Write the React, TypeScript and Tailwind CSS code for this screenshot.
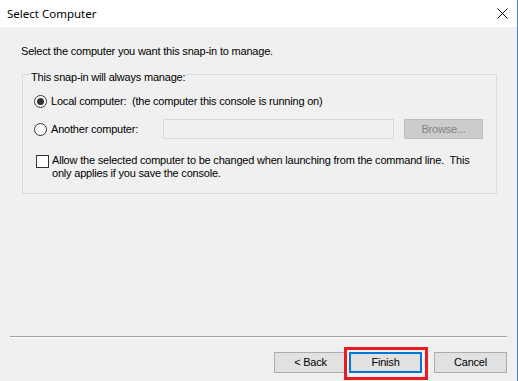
export default function App() {
  const ui = { fontFamily: '"Liberation Sans", Arial, sans-serif' };

  return (
    <div
      className="w-[518px] h-[381px] flex flex-col bg-[#f0f0f0] border-r border-[#3c7fd2] text-[11px] leading-[13px] tracking-[-0.2px] text-black overflow-hidden"
      style={ui}
    >
      {/* title bar */}
      <div className="h-[27px] shrink-0 flex items-center justify-between bg-white pl-[7px] pr-[9px]">
        <span
          className="text-[11.5px] tracking-normal text-black"
          style={{ fontFamily: '"Noto Sans", "Open Sans", sans-serif' }}
        >
          Select Computer
        </span>
        <svg width="11" height="11" viewBox="0 0 11 11" className="block">
          <path d="M0.5 0.5 L10.5 10.5 M10.5 0.5 L0.5 10.5" stroke="#000" strokeWidth="1" />
        </svg>
      </div>

      <div className="ml-[21px] mt-[18px]">Select the computer you want this snap-in to manage.</div>

      {/* group box */}
      <div className="relative ml-[22px] mt-[16px] w-[475px] h-[120px] border border-[#dcdcdc] pl-[11px]">
        <span className="absolute -top-[4px] left-[7px] px-[1px] bg-[#f0f0f0]">
          This snap-in will always manage:
        </span>

        <div className="mt-[20px] flex items-center h-[13px]">
          <span className="w-[13px] h-[13px] rounded-full border border-[#333] bg-white flex items-center justify-center">
            <span className="w-[7px] h-[7px] rounded-full bg-[#333]" />
          </span>
          <span className="ml-[4px] whitespace-pre">Local computer:  (the computer this console is running on)</span>
        </div>

        <div className="mt-[11px] flex items-center h-[20px]">
          <span className="w-[13px] h-[13px] rounded-full border border-[#333] bg-white" />
          <span className="ml-[4px] w-[112px]">Another computer:</span>
          <div className="w-[231px] h-[20px] border border-[#d9d9d9] bg-[#f0f0f0]" />
          <div className="ml-[10px] w-[79px] h-[20px] border border-[#bfbfbf] bg-[#cccccc] text-[#838383] flex items-center justify-center">
            Browse...
          </div>
        </div>

        <div className="mt-[15px] flex items-start ml-[2px]">
          <span className="mt-[1px] w-[13px] h-[13px] shrink-0 border border-[#333] bg-white" />
          <span className="ml-[3px] whitespace-pre">
            Allow the selected computer to be changed when launching from the command line.  This
            <br />
            only applies if you save the console.
          </span>
        </div>
      </div>

      {/* separator */}
      <div className="ml-[10px] mt-[142px] w-[497px] border-t border-[#a0a0a0] border-b border-b-white" />

      {/* buttons */}
      <div className="mt-[14px] flex justify-end pr-[10px]">
        <div className="w-[73px] h-[21px] border border-[#adadad] bg-[#e1e1e1] flex items-center justify-center">
          &lt; Back
        </div>
        <div className="relative ml-[2px]">
          <div className="w-[73px] h-[21px] border-2 border-[#0078d7] bg-[#e1e1e1] flex items-center justify-center">
            Finish
          </div>
          <div className="absolute -left-[5px] -top-[5px] w-[84px] h-[33px] border-[3px] border-[#e81b23]" />
        </div>
        <div className="ml-[12px] w-[73px] h-[21px] border border-[#adadad] bg-[#e1e1e1] flex items-center justify-center">
          Cancel
        </div>
      </div>
    </div>
  );
}
